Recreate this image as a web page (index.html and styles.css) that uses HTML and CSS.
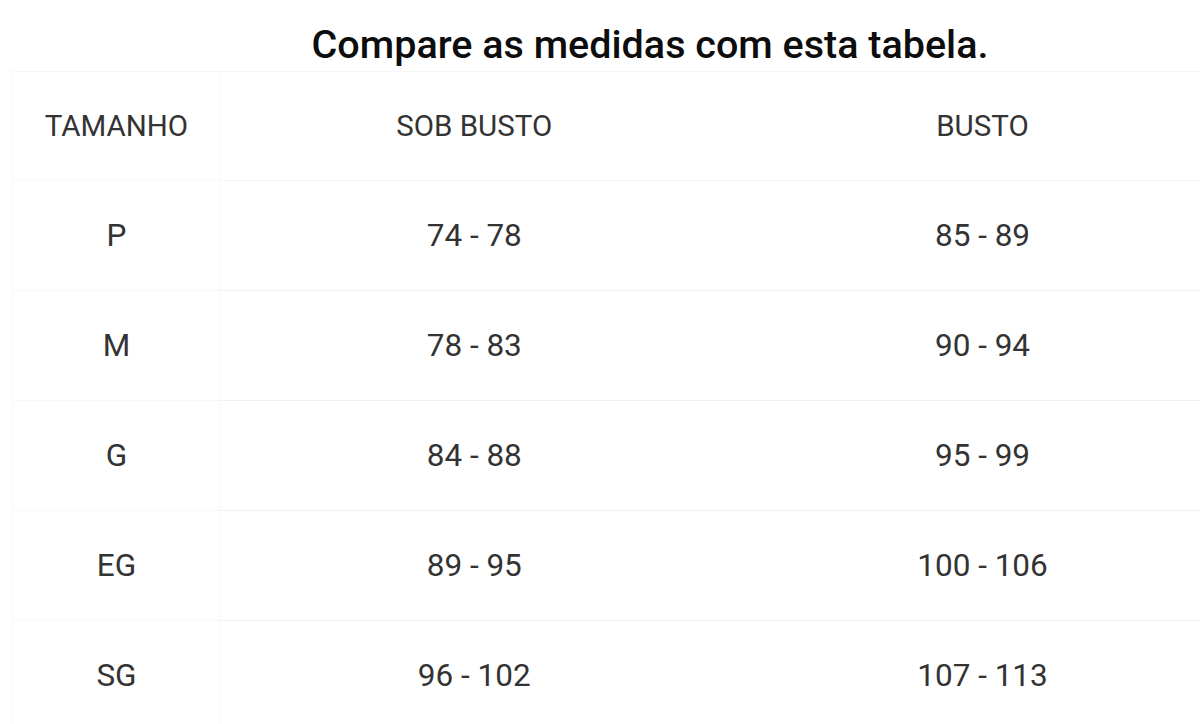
FILE: index.html
```html
<!DOCTYPE html>
<html lang="pt">
<head>
<meta charset="utf-8">
<title>Tabela de medidas</title>
<link rel="stylesheet" href="styles.css">
</head>
<body>
<div class="page">
  <h1 class="title">Compare as medidas com esta tabela.</h1>
  <table class="sizes">
    <colgroup>
      <col class="c-size">
      <col class="c-under">
      <col class="c-bust">
    </colgroup>
    <thead>
      <tr>
        <th class="first">TAMANHO</th>
        <th>SOB BUSTO</th>
        <th>BUSTO</th>
      </tr>
    </thead>
    <tbody>
      <tr><td class="first">P</td><td>74 - 78</td><td>85 - 89</td></tr>
      <tr><td class="first">M</td><td>78 - 83</td><td>90 - 94</td></tr>
      <tr><td class="first">G</td><td>84 - 88</td><td>95 - 99</td></tr>
      <tr><td class="first">EG</td><td>89 - 95</td><td>100 - 106</td></tr>
      <tr><td class="first">SG</td><td>96 - 102</td><td>107 - 113</td></tr>
    </tbody>
  </table>
</div>
</body>
</html>
```

FILE: styles.css
```css
html, body {
  margin: 0;
  padding: 0;
  background: #ffffff;
  overflow: hidden;
}

body {
  font-family: Roboto, "Liberation Sans", Arial, sans-serif;
  color: #333333;
}

.page {
  width: 1200px;
  height: 724px;
  padding-left: 12px;
  box-sizing: border-box;
}

.title {
  margin: 25px 0 6px 0;
  padding-left: 88px;
  font-size: 39.5px;
  line-height: 40px;
  font-weight: 500;
  color: #0d0d0d;
  text-align: center;
}

.sizes {
  border-collapse: collapse;
  table-layout: fixed;
  width: 1225px;
  border-top: 1px solid #f7f7f7;
  border-left: 1px solid #f7f7f7;
}

.c-size { width: 208px; }
.c-under { width: 507px; }
.c-bust { width: 510px; }

.sizes th,
.sizes td {
  padding: 0;
  text-align: center;
  vertical-align: middle;
  border-bottom: 1px solid #f1f1f1;
}

.sizes th {
  height: 108px;
  font-size: 29.5px;
  font-weight: 400;
  color: #333333;
  border-bottom-color: #f6f6f6;
}

.sizes td {
  height: 109px;
  font-size: 31.5px;
  color: #333333;
}

.sizes .first {
  border-right: 1px solid #f7f7f7;
  border-bottom-color: #f8f8f8;
}
```
